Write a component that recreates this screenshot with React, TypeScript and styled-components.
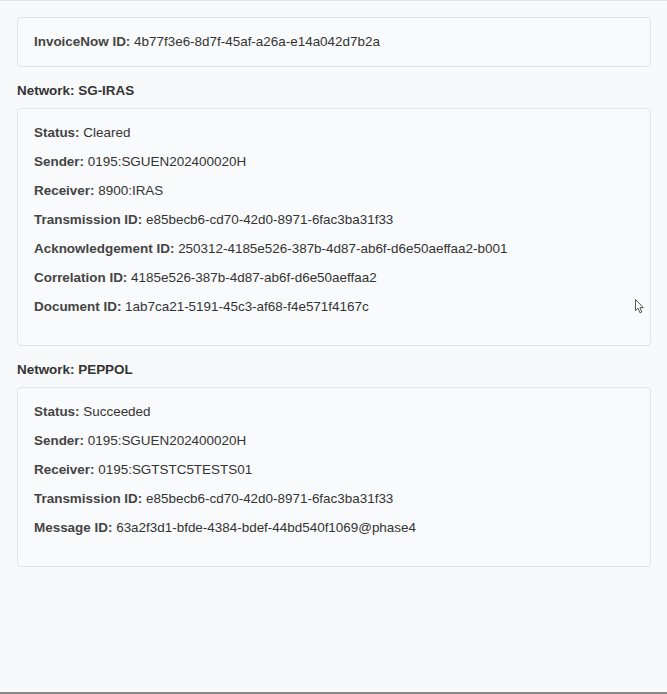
import React from "react";
import styled, { createGlobalStyle } from "styled-components";

const Global = createGlobalStyle`
  html, body { margin: 0; padding: 0; background: #f8f9fa; }
  body { font-family: "Liberation Sans", Arial, sans-serif; font-size: 13.45px; color: #333; }
`;

const Page = styled.div`
  position: relative;
  box-sizing: border-box;
  height: 694px;
  border-top: 1px solid #e3e4e6;
  border-bottom: 2px solid #8a8a8a;
  padding: 16px 16px 0 17px;
  background: #f8f9fa;
  overflow: hidden;
`;

const Card = styled.div`
  background: #f9fafb;
  border: 1px solid #e2e4e7;
  border-radius: 4px;
  padding: 16px 16px 17px 16px;
`;

const IdCard = styled(Card)`
  padding-bottom: 16px;
`;

const Heading = styled.div`
  font-weight: bold;
  font-size: 13.45px;
  line-height: 16px;
  color: #333;
  margin: 16px 0 9px;
`;

const Row = styled.div<{ $last?: boolean }>`
  line-height: 16px;
  margin-bottom: ${(p) => (p.$last ? "0" : "13px")};
  color: #333;
  white-space: nowrap;
`;

const Label = styled.span`
  font-weight: bold;
  color: #444;
`;

const Cursor = styled.svg`
  position: absolute;
  left: 635px;
  top: 298px;
`;

type Field = [string, string];

const iras: Field[] = [
  ["Status", "Cleared"],
  ["Sender", "0195:SGUEN202400020H"],
  ["Receiver", "8900:IRAS"],
  ["Transmission ID", "e85becb6-cd70-42d0-8971-6fac3ba31f33"],
  ["Acknowledgement ID", "250312-4185e526-387b-4d87-ab6f-d6e50aeffaa2-b001"],
  ["Correlation ID", "4185e526-387b-4d87-ab6f-d6e50aeffaa2"],
  ["Document ID", "1ab7ca21-5191-45c3-af68-f4e571f4167c"],
];

const peppol: Field[] = [
  ["Status", "Succeeded"],
  ["Sender", "0195:SGUEN202400020H"],
  ["Receiver", "0195:SGTSTC5TESTS01"],
  ["Transmission ID", "e85becb6-cd70-42d0-8971-6fac3ba31f33"],
  ["Message ID", "63a2f3d1-bfde-4384-bdef-44bd540f1069@phase4"],
];

const Fields = ({ items }: { items: Field[] }) => (
  <Card>
    {items.map(([k, v]) => (
      <Row key={k}>
        <Label>{k}:</Label> {v}
      </Row>
    ))}
  </Card>
);

export default function App() {
  return (
    <>
      <Global />
      <Page>
        <IdCard>
          <Row $last>
            <Label>InvoiceNow ID:</Label> 4b77f3e6-8d7f-45af-a26a-e14a042d7b2a
          </Row>
        </IdCard>
        <Heading>Network: SG-IRAS</Heading>
        <Fields items={iras} />
        <Heading>Network: PEPPOL</Heading>
        <Fields items={peppol} />
        <Cursor width="10" height="15" viewBox="0 0 10 15">
          <path
            d="M0.5 0.5 L0.5 11.5 L3 9.2 L5 13.8 L6.8 13 L4.9 8.6 L8.3 8.6 Z"
            fill="#fff"
            stroke="#555"
            strokeWidth="1"
            strokeLinejoin="round"
          />
        </Cursor>
      </Page>
    </>
  );
}
